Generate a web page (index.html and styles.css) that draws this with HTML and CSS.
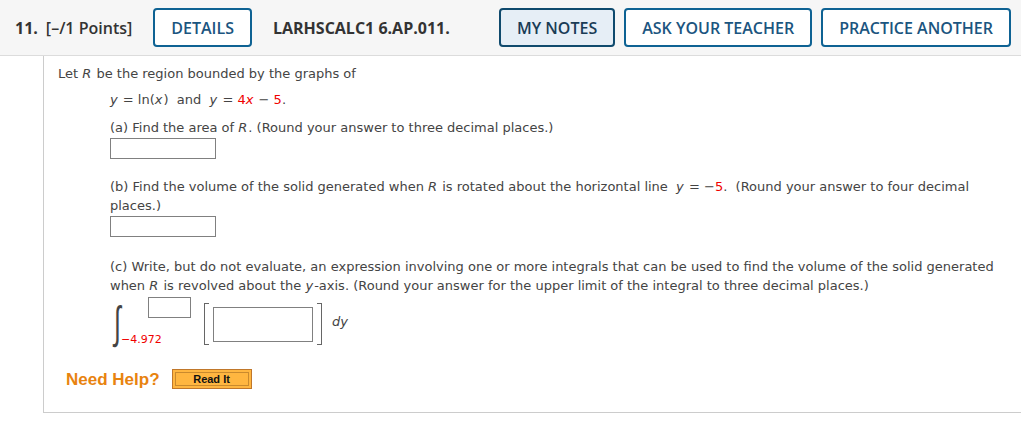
FILE: index.html
```html
<!DOCTYPE html>
<html>
<head>
<meta charset="utf-8">
<link rel="stylesheet" href="styles.css">
</head>
<body>
<div class="header">
  <span class="qnum">11.</span>
  <span class="points">[–/1 Points]</span>
  <span class="btn">DETAILS</span>
  <span class="code">LARHSCALC1 6.AP.011.</span>
  <div class="actions">
    <span class="btn btn-active">MY NOTES</span>
    <span class="btn">ASK YOUR TEACHER</span>
    <span class="btn">PRACTICE ANOTHER</span>
  </div>
</div>
<div class="qbox">
  <p class="intro">Let <i>R</i> be the region bounded by the graphs of</p>
  <p class="eq"><i>y</i> = ln(<i>x</i>) &nbsp;and &nbsp;<i>y</i> = <span class="red">4</span><i class="red">x</i> − <span class="red">5</span>.</p>
  <div class="part">
    <p>(a) Find the area of <i>R</i>. (Round your answer to three decimal places.)</p>
    <span class="input"></span>
  </div>
  <div class="part part-b">
    <p>(b) Find the volume of the solid generated when <i>R</i> is rotated about the horizontal line &nbsp;<i>y</i> = −<span class="red">5</span>. &nbsp;(Round your answer to four decimal places.)</p>
    <span class="input"></span>
  </div>
  <div class="part part-c">
    <p>(c) Write, but do not evaluate, an expression involving one or more integrals that can be used to find the volume of the solid generated when <i>R</i> is revolved about the <i>y</i>-axis. (Round your answer for the upper limit of the integral to three decimal places.)</p>
    <div class="integral">
      <div class="int-sign">
        <span class="sign">∫</span>
        <span class="input upper"></span>
        <span class="lower">−4.972</span>
      </div>
      <div class="bracketed">
        <span class="bracket left"></span>
        <span class="input integrand"></span>
        <span class="bracket right"></span>
      </div>
      <span class="dy"><i>dy</i></span>
    </div>
  </div>
  <div class="help">
    <span class="need">Need Help?</span>
    <span class="readit"><span>Read It</span></span>
  </div>
</div>
</body>
</html>
```
FILE: styles.css
```css
html, body {
  margin: 0;
  padding: 0;
  background: #ffffff;
}
body {
  width: 1021px;
  height: 427px;
  overflow: hidden;
}
.header {
  display: flex;
  align-items: center;
  height: 56px;
  padding: 0 10px 0 15px;
  background: #f6f6f6;
  border-bottom: 1px solid #dcdcdc;
  font-family: "Open Sans", "Noto Sans", sans-serif;
  font-size: 16px;
  font-weight: 600;
  color: #333;
  box-sizing: border-box;
}
.qnum {
  font-weight: 700;
  margin-right: 8px;
}
.points {
  margin-right: 21px;
}
.code {
  margin-left: 21px;
  font-weight: 700;
  color: #333;
}
.btn {
  display: inline-flex;
  align-items: center;
  height: 39px;
  box-sizing: border-box;
  padding: 0 16px;
  border: 2px solid #0e6293;
  border-radius: 4px;
  background: #ffffff;
  color: #1b5580;
  font-weight: 600;
}
.btn-active {
  background: #e6eef6;
  border-color: #104a6d;
  color: #1a3c56;
}
.actions {
  margin-left: auto;
  display: flex;
  gap: 9px;
}
.qbox {
  margin-left: 43px;
  height: 357px;
  box-sizing: border-box;
  border-left: 1px solid #cccccc;
  border-bottom: 1px solid #cccccc;
  padding: 8px 14px 0;
  font-family: "DejaVu Sans", Verdana, sans-serif;
  font-size: 13px;
  line-height: 19px;
  color: #444;
}
i {
  margin-right: 1px;
}
p {
  margin: 0;
}
.red {
  color: #f00000;
}
.eq {
  margin: 7px 0 0 52px;
}
.part {
  margin: 9px 0 0 52px;
}
.part-b {
  margin-top: 18px;
}
.part-c {
  margin-top: 20px;
}
.part p {
  padding-right: 6px;
}
.input {
  display: block;
  width: 106px;
  height: 21px;
  box-sizing: border-box;
  border: 1px solid #808080;
  background: #fff;
  margin-top: 1px;
}
.integral {
  display: flex;
  align-items: flex-start;
  height: 52px;
  margin-top: 2px;
}
.int-sign {
  position: relative;
  width: 94px;
  height: 52px;
}
.sign {
  position: absolute;
  left: 4px;
  top: 4px;
  font-family: "DejaVu Sans", sans-serif;
  font-weight: 200;
  font-size: 28px;
  line-height: 28px;
  color: #444;
  transform: scale(0.9, 1.6);
  transform-origin: top left;
}
.input.upper {
  position: absolute;
  left: 38px;
  top: 0;
  width: 43px;
  height: 21px;
  margin: 0;
}
.lower {
  position: absolute;
  left: 11px;
  top: 36px;
  font-size: 11px;
  line-height: 14px;
  color: #f00000;
}
.bracketed {
  display: flex;
  align-items: center;
  gap: 4px;
  margin-top: 6px;
}
.bracket {
  display: block;
  width: 5px;
  height: 42px;
  box-sizing: border-box;
  border: 1px solid #666;
}
.bracket.left {
  border-right: none;
}
.bracket.right {
  border-left: none;
}
.input.integrand {
  width: 100px;
  height: 35px;
  margin: 0;
}
.dy {
  margin-left: 10px;
  margin-top: 15px;
}
.help {
  display: flex;
  align-items: center;
  margin: 20px 0 0 8px;
}
.need {
  font-family: "Liberation Sans", Arial, sans-serif;
  font-weight: 700;
  font-size: 17px;
  color: #e8830f;
}
.readit {
  margin-left: 12px;
  display: inline-block;
  width: 80px;
  height: 20px;
  box-sizing: border-box;
  border: 1px solid #c0772a;
  background: #ffb640;
  padding: 2px;
}
.readit span {
  display: flex;
  align-items: center;
  justify-content: center;
  height: 100%;
  box-sizing: border-box;
  border: 1px solid #c98a2e;
  font-family: "Liberation Sans", Arial, sans-serif;
  font-weight: 700;
  font-size: 11px;
  color: #111;
}
```
